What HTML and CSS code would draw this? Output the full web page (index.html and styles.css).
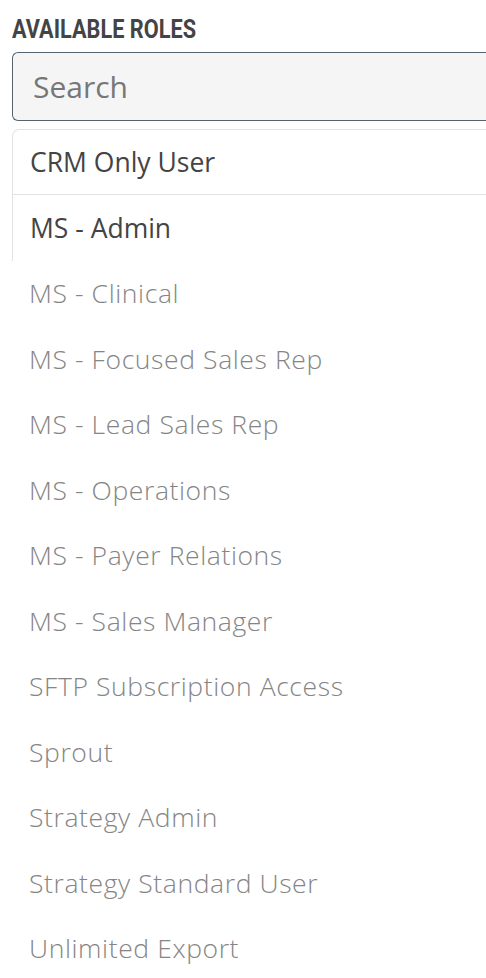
FILE: index.html
```html
<!DOCTYPE html>
<html lang="en">
<head>
<meta charset="utf-8">
<link rel="stylesheet" href="styles.css">
</head>
<body>
<div class="panel">
  <h2 class="title">AVAILABLE ROLES</h2>
  <input class="search" type="text" placeholder="Search">
  <div class="list">
    <div class="list-box">
      <div class="item item-first">CRM Only User</div>
      <div class="item">MS - Admin</div>
    </div>
    <div class="list-rest">
      <div class="item item-muted">MS - Clinical</div>
      <div class="item item-muted">MS - Focused Sales Rep</div>
      <div class="item item-muted">MS - Lead Sales Rep</div>
      <div class="item item-muted">MS - Operations</div>
      <div class="item item-muted">MS - Payer Relations</div>
      <div class="item item-muted">MS - Sales Manager</div>
      <div class="item item-muted">SFTP Subscription Access</div>
      <div class="item item-muted">Sprout</div>
      <div class="item item-muted">Strategy Admin</div>
      <div class="item item-muted">Strategy Standard User</div>
      <div class="item item-muted">Unlimited Export</div>
    </div>
  </div>
</div>
</body>
</html>
```
FILE: styles.css
```css
html, body {
  margin: 0;
  padding: 0;
  background: #ffffff;
}
.panel {
  padding: 0 0 0 12px;
  font-family: "Open Sans", "Liberation Sans", sans-serif;
}
.title {
  margin: 0;
  padding-top: 14px;
  height: 52px;
  box-sizing: border-box;
  font-family: "Roboto", "Liberation Sans", sans-serif;
  font-weight: 700;
  font-size: 26px;
  line-height: 30px;
  color: #444444;
  transform: scaleX(0.835);
  transform-origin: left top;
  white-space: nowrap;
}
.search {
  display: block;
  box-sizing: border-box;
  width: 100%;
  height: 69px;
  margin: 0;
  padding: 0 20px;
  border: 1px solid #56636d;
  border-right: none;
  border-radius: 6px 0 0 6px;
  background: #f5f5f5;
  font-family: "Open Sans", sans-serif;
  font-size: 30px;
  color: #333;
  outline: none;
}
.search::placeholder {
  color: #777777;
}
.list {
  margin-top: 8px;
}
.list-box {
  border-top: 1px solid #e1e1e6;
  border-left: 1px solid #e1e1e6;
  border-top-left-radius: 7px;
}
.list-rest {
  display: flex;
  flex-direction: column;
}
.item {
  height: 65.5px;
  box-sizing: border-box;
  padding-left: 17px;
  display: flex;
  align-items: center;
  font-size: 26.5px;
  color: #444444;
  white-space: nowrap;
}
.item-first {
  height: 65px;
  border-bottom: 1px solid #e1e1e6;
}
.item-muted {
  padding-left: 17px;
  font-family: "Open Sans", sans-serif;
  font-size: 26.5px;
  letter-spacing: 0.6px;
  color: #858585;
  font-weight: 300;
}
```
